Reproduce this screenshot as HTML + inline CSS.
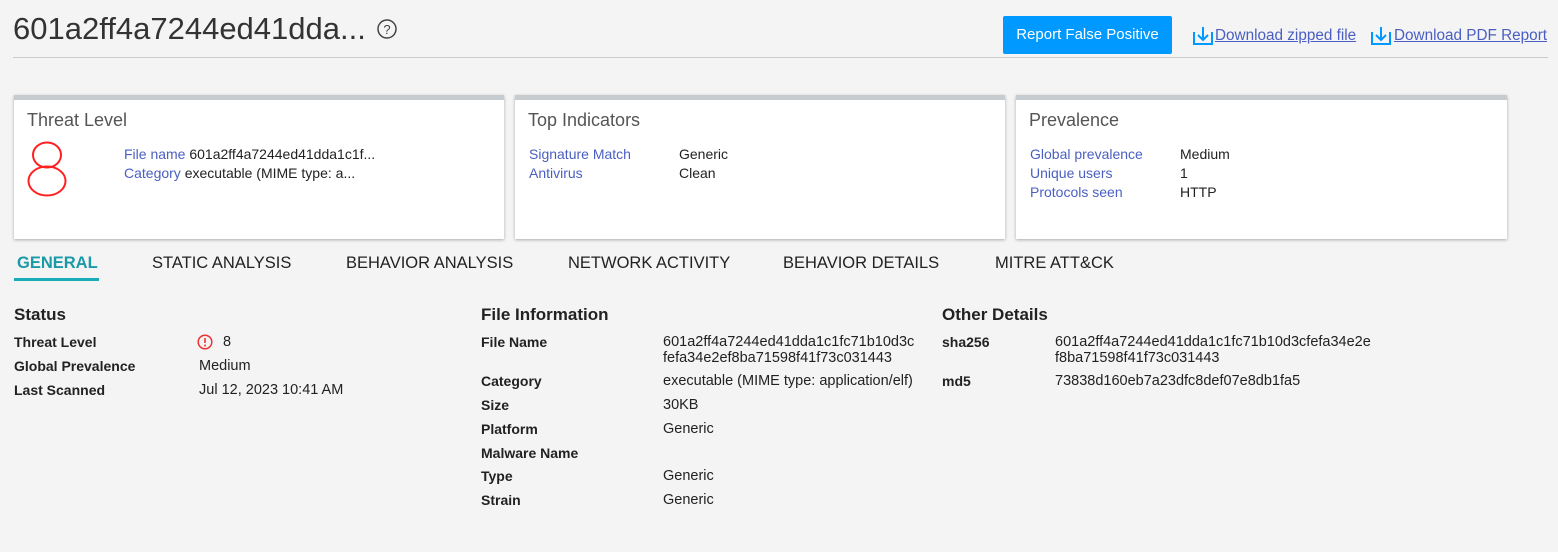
<!DOCTYPE html>
<html><head><meta charset="utf-8"><style>
body{margin:0;width:1558px;height:552px;background:#f4f4f4;font-family:"Liberation Sans",sans-serif;color:#222;position:relative;overflow:hidden;font-size:14.5px}
.a{position:absolute;white-space:nowrap;line-height:17px}
.card{position:absolute;top:95px;height:139px;background:#fff;border-top:5px solid #c5cbce;box-shadow:0 1px 3px rgba(0,0,0,.3)}
.ct{position:absolute;left:13px;top:10px;font-size:18px;color:#555}
.card .a{font-size:14px}
.lb{color:#4a5fc1}
.tab{position:absolute;top:254px;font-size:16.5px;color:#222}
.b{font-weight:bold;font-size:14px}
.h{font-size:17px;font-weight:bold}
a{color:#4a5fc1;text-decoration:underline}
</style></head><body>
<div class="a" style="left:13px;top:11px;font-size:31px;line-height:36px;color:#333">601a2ff4a7244ed41dda...</div>
<svg class="a" style="left:376px;top:18px" width="22" height="22" viewBox="0 0 22 22"><circle cx="11" cy="11" r="9" fill="none" stroke="#444" stroke-width="1.5"/><text x="11" y="16" font-size="13" text-anchor="middle" fill="#444" font-family="Liberation Sans">?</text></svg>
<div class="a" style="left:13px;top:57px;width:1535px;height:1px;background:#ccc"></div>
<div class="a" style="left:1003px;top:16px;width:169px;height:38px;background:#0099ff;border-radius:2px;color:#fff;font-size:15px;line-height:38px;text-align:center">Report False Positive</div>
<svg class="a" style="left:1192px;top:26px" width="22" height="20" viewBox="0 0 22 20"><path d="M2 6v12h18V6M11 1v13M6 9l5 5 5-5" fill="none" stroke="#0099ff" stroke-width="2"/></svg>
<a class="a" style="left:1215px;top:27px;font-size:15.3px">Download zipped file</a>
<svg class="a" style="left:1370px;top:26px" width="22" height="20" viewBox="0 0 22 20"><path d="M2 6v12h18V6M11 1v13M6 9l5 5 5-5" fill="none" stroke="#0099ff" stroke-width="2"/></svg>
<a class="a" style="left:1394px;top:27px;font-size:15.3px">Download PDF Report</a>

<div class="card" style="left:14px;width:490px"><div class="ct">Threat Level</div>
<svg class="a" style="left:10px;top:40px" width="50" height="62" viewBox="0 0 50 62"><ellipse cx="23" cy="15" rx="14" ry="12.5" fill="none" stroke="#ff2020" stroke-width="2"/><ellipse cx="23" cy="41" rx="18.5" ry="14.5" fill="none" stroke="#ff2020" stroke-width="2"/></svg>
<div class="a" style="left:110px;top:46px"><span class="lb">File name</span> 601a2ff4a7244ed41dda1c1f...</div>
<div class="a" style="left:110px;top:65px"><span class="lb">Category</span> executable (MIME type: a...</div></div>
<div class="card" style="left:515px;width:490px"><div class="ct">Top Indicators</div>
<div class="a lb" style="left:14px;top:46px">Signature Match</div><div class="a" style="left:164px;top:46px">Generic</div>
<div class="a lb" style="left:14px;top:65px">Antivirus</div><div class="a" style="left:164px;top:65px">Clean</div></div>
<div class="card" style="left:1016px;width:491px"><div class="ct">Prevalence</div>
<div class="a lb" style="left:14px;top:46px">Global prevalence</div><div class="a" style="left:164px;top:46px">Medium</div>
<div class="a lb" style="left:14px;top:65px">Unique users</div><div class="a" style="left:164px;top:65px">1</div>
<div class="a lb" style="left:14px;top:84px">Protocols seen</div><div class="a" style="left:164px;top:84px">HTTP</div></div>

<div class="tab" style="left:17px;color:#1a9aa6;font-weight:bold">GENERAL</div>
<div class="a" style="left:14px;top:278px;width:85px;height:3px;background:#1aabb8"></div>
<div class="tab" style="left:152px">STATIC ANALYSIS</div>
<div class="tab" style="left:346px">BEHAVIOR ANALYSIS</div>
<div class="tab" style="left:568px">NETWORK ACTIVITY</div>
<div class="tab" style="left:783px">BEHAVIOR DETAILS</div>
<div class="tab" style="left:995px">MITRE ATT&amp;CK</div>

<div class="a h" style="left:14px;top:306px">Status</div>
<div class="a b" style="left:14px;top:334px">Threat Level</div>
<svg class="a" style="left:197px;top:334px" width="16" height="16" viewBox="0 0 16 16"><circle cx="8" cy="8" r="6.8" fill="none" stroke="#e33" stroke-width="1.5"/><path d="M8 4v5" stroke="#e33" stroke-width="1.6"/><circle cx="8" cy="11.5" r="1" fill="#e33"/></svg>
<div class="a" style="left:223px;top:334px">8</div>
<div class="a b" style="left:14px;top:358px">Global Prevalence</div><div class="a" style="left:199px;top:358px">Medium</div>
<div class="a b" style="left:14px;top:382px">Last Scanned</div><div class="a" style="left:199px;top:382px">Jul 12, 2023 10:41 AM</div>

<div class="a h" style="left:481px;top:306px">File Information</div>
<div class="a b" style="left:481px;top:334px">File Name</div><div class="a" style="left:663px;top:334px;line-height:16px">601a2ff4a7244ed41dda1c1fc71b10d3c<br>fefa34e2ef8ba71598f41f73c031443</div>
<div class="a b" style="left:481px;top:373px">Category</div><div class="a" style="left:663px;top:373px">executable (MIME type: application/elf)</div>
<div class="a b" style="left:481px;top:397px">Size</div><div class="a" style="left:663px;top:397px">30KB</div>
<div class="a b" style="left:481px;top:421px">Platform</div><div class="a" style="left:663px;top:421px">Generic</div>
<div class="a b" style="left:481px;top:445px">Malware Name</div>
<div class="a b" style="left:481px;top:468px">Type</div><div class="a" style="left:663px;top:468px">Generic</div>
<div class="a b" style="left:481px;top:492px">Strain</div><div class="a" style="left:663px;top:492px">Generic</div>

<div class="a h" style="left:942px;top:306px">Other Details</div>
<div class="a b" style="left:942px;top:334px">sha256</div><div class="a" style="left:1055px;top:334px;line-height:16px">601a2ff4a7244ed41dda1c1fc71b10d3cfefa34e2e<br>f8ba71598f41f73c031443</div>
<div class="a b" style="left:942px;top:373px">md5</div><div class="a" style="left:1055px;top:373px">73838d160eb7a23dfc8def07e8db1fa5</div>
</body></html>
